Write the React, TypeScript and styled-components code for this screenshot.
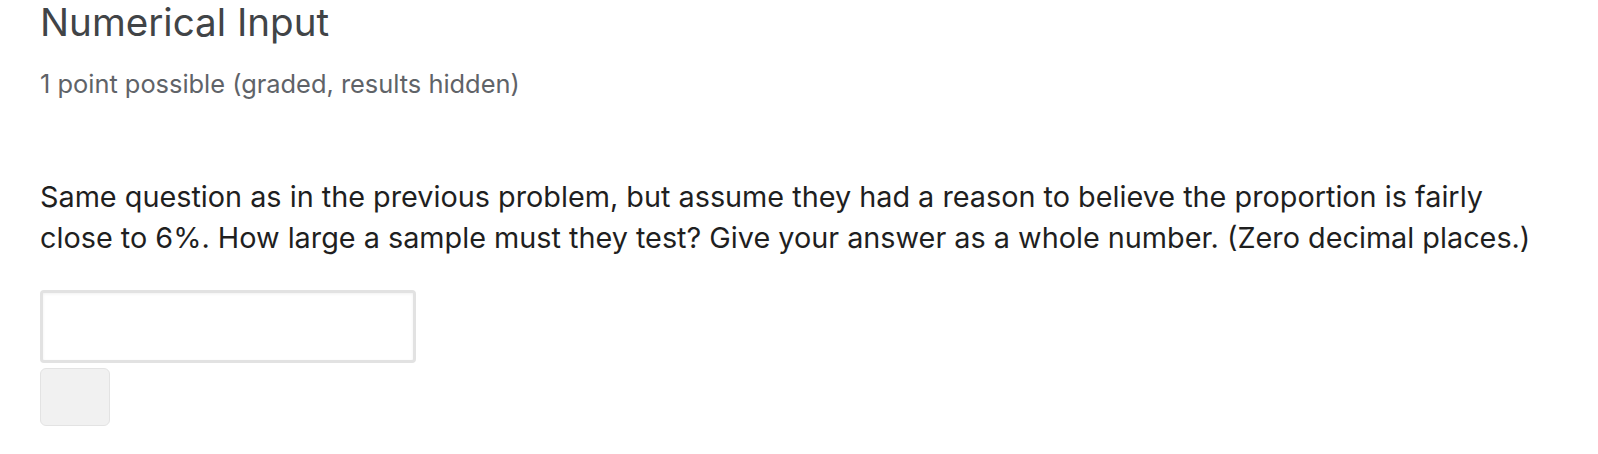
import styled, { createGlobalStyle } from "styled-components"

const Global = createGlobalStyle`
body {
  margin: 0;
  background: #fff;
  font-family: Inter, "Noto Sans", sans-serif;
}
`

const Problem = styled.section`
padding: 0 40px;
`

const Titulo = styled.h2`
margin: 0;
font-weight: 400;
font-size: 38.6px;
line-height: 44px;
color: #414447;
`

const Pontos = styled.div`
margin-top: 25px;
font-size: 25.4px;
line-height: 30px;
color: #5f6368;
`

const Enunciado = styled.p`
margin: 77px 0 0;
font-size: 28.8px;
line-height: 41px;
color: #1f1f1f;
`

const Resposta = styled.input`
display: block;
box-sizing: border-box;
margin-top: 32px;
width: 376px;
height: 73px;
border: 3px solid #e2e2e2;
border-radius: 4px;
box-shadow: inset 0 1px 3px rgba(0, 0, 0, 0.06);
background: #fff;
`

const Botao = styled.button`
display: block;
box-sizing: border-box;
margin-top: 5px;
width: 70px;
height: 58px;
border: 1px solid #e3e3e3;
border-radius: 6px;
background: #f1f1f1;
`

export default function App() {
    return (
        <>
            <Global />
            <Problem>
                <Titulo>Numerical Input</Titulo>
                <Pontos>1 point possible (graded, results hidden)</Pontos>
                <Enunciado>Same question as in the previous problem, but assume they had a reason to believe the proportion is fairly close to 6%. How large a sample must they test? Give your answer as a whole number. (Zero decimal places.)</Enunciado>
                <Resposta type="text" />
                <Botao />
            </Problem>
        </>
    )
}
